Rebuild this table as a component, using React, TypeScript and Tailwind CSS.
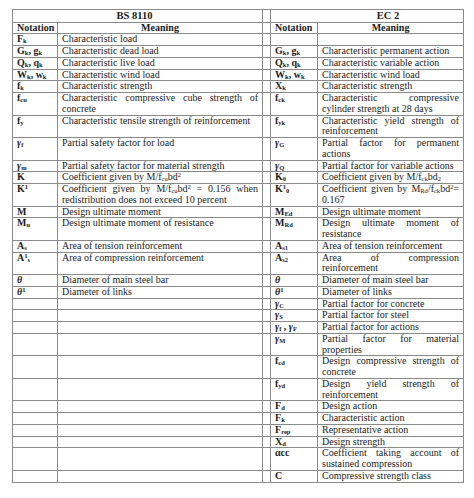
import type { ReactNode } from "react";

type Row = {
  bsN?: ReactNode;
  bsM?: ReactNode;
  ecN?: ReactNode;
  ecM?: ReactNode;
};

// small subscripts / superscripts, shifted with vertical-align so lines keep their height
const S = ({ children }: { children: ReactNode }) => (
  <span className="align-[-1px] text-[6.5px] leading-none font-bold">{children}</span>
);
const Sm = ({ children }: { children: ReactNode }) => (
  <span className="align-[-1px] text-[6.5px] leading-none">{children}</span>
);
const Up = ({ children }: { children: ReactNode }) => (
  <span className="align-[3px] text-[6.5px] leading-none">{children}</span>
);
const G = ({ children }: { children: ReactNode }) => <span className="italic">{children}</span>;

const rows: Row[] = [
  { bsN: <>F<S>k</S></>, bsM: "Characteristic load" },
  {
    bsN: <>G<S>k</S>, g<S>k</S></>,
    bsM: "Characteristic dead load",
    ecN: <>G<S>k</S>, g<S>k</S></>,
    ecM: "Characteristic permanent action",
  },
  {
    bsN: <>Q<S>k</S>, q<S>k</S></>,
    bsM: "Characteristic live load",
    ecN: <>Q<S>k</S>, q<S>k</S></>,
    ecM: "Characteristic variable action",
  },
  {
    bsN: <>W<S>k</S>, w<S>k</S></>,
    bsM: "Characteristic wind load",
    ecN: <>W<S>k</S>, w<S>k</S></>,
    ecM: "Characteristic wind load",
  },
  {
    bsN: <>f<S>k</S></>,
    bsM: "Characteristic strength",
    ecN: <>X<S>k</S></>,
    ecM: "Characteristic strength",
  },
  {
    bsN: <>f<S>cu</S></>,
    bsM: "Characteristic compressive cube strength of concrete",
    ecN: <>f<S>ck</S></>,
    ecM: "Characteristic compressive cylinder strength at 28 days",
  },
  {
    bsN: <>f<S>y</S></>,
    bsM: "Characteristic tensile strength of reinforcement",
    ecN: <>f<S>yk</S></>,
    ecM: "Characteristic yield strength of reinforcement",
  },
  {
    bsN: <><G>γ</G><S>f</S></>,
    bsM: "Partial safety factor for load",
    ecN: <><G>γ</G><S>G</S></>,
    ecM: "Partial factor for permanent actions",
  },
  {
    bsN: <><G>γ</G><S>m</S></>,
    bsM: "Partial safety factor for material strength",
    ecN: <><G>γ</G><S>Q</S></>,
    ecM: "Partial factor for variable actions",
  },
  {
    bsN: "K",
    bsM: <>Coefficient given by M/f<Sm>cu</Sm>bd<Up>2</Up></>,
    ecN: <>K<S>0</S></>,
    ecM: <>Coefficient given by M/f<Sm>ck</Sm>bd<Sm>2</Sm></>,
  },
  {
    bsN: <>K<Up>1</Up></>,
    bsM: (
      <>
        Coefficient given by M/f<Sm>cu</Sm>bd<Up>2</Up> = 0.156 when redistribution does not exceed 10
        percent
      </>
    ),
    ecN: <>K<Up>1</Up><S>0</S></>,
    ecM: <>Coefficient given by M<Sm>Rd</Sm>/f<Sm>ck</Sm>bd<Up>2</Up>= 0.167</>,
  },
  {
    bsN: "M",
    bsM: "Design ultimate moment",
    ecN: <>M<S>Ed</S></>,
    ecM: "Design ultimate moment",
  },
  {
    bsN: <>M<S>u</S></>,
    bsM: "Design ultimate moment of resistance",
    ecN: <>M<S>Rd</S></>,
    ecM: "Design ultimate moment of resistance",
  },
  {
    bsN: <>A<S>s</S></>,
    bsM: "Area of tension reinforcement",
    ecN: <>A<S>s1</S></>,
    ecM: "Area of tension reinforcement",
  },
  {
    bsN: <>A<Up>1</Up><S>s</S></>,
    bsM: "Area of compression reinforcement",
    ecN: <>A<S>s2</S></>,
    ecM: "Area of compression reinforcement",
  },
  {
    bsN: <G>θ</G>,
    bsM: "Diameter of main steel bar",
    ecN: <G>θ</G>,
    ecM: "Diameter of main steel bar",
  },
  {
    bsN: <><G>θ</G><Up>1</Up></>,
    bsM: "Diameter of links",
    ecN: <><G>θ</G><Up>1</Up></>,
    ecM: "Diameter of links",
  },
  { ecN: <><G>γ</G><S>C</S></>, ecM: "Partial factor for concrete" },
  { ecN: <><G>γ</G><S>S</S></>, ecM: "Partial factor for steel" },
  { ecN: <><G>γ</G><S>f</S> , <G>γ</G><S>F</S></>, ecM: "Partial factor for actions" },
  { ecN: <><G>γ</G><S>M</S></>, ecM: "Partial factor for material properties" },
  { ecN: <>f<S>cd</S></>, ecM: "Design compressive strength of concrete" },
  { ecN: <>f<S>yd</S></>, ecM: "Design yield strength of reinforcement" },
  { ecN: <>F<S>d</S></>, ecM: "Design action" },
  { ecN: <>F<S>k</S></>, ecM: "Characteristic action" },
  { ecN: <>F<S>rep</S></>, ecM: "Representative action" },
  { ecN: <>X<S>d</S></>, ecM: "Design strength" },
  { ecN: "αcc", ecM: "Coefficient taking account of sustained compression" },
  { ecN: "C", ecM: "Compressive strength class" },
];

const cell = "border border-[#8a8a8a] align-top p-0";
const nCell = `${cell} pl-[4px] font-bold`;
const mCell = `${cell} pl-[4px] pr-[4px] text-justify`;

export default function App() {
  return (
    <div className="min-h-[498px] w-[474px] bg-white pt-[9px] pl-[12px]">
      <table
        className="w-[451px] table-fixed border-collapse text-[10px] leading-[10.75px] text-[#1c1c1c] font-['Liberation_Serif','Times_New_Roman',serif]"
      >
        <colgroup>
          <col className="w-[45px]" />
          <col className="w-[205px]" />
          <col className="w-[8px]" />
          <col className="w-[47px]" />
          <col className="w-[146px]" />
        </colgroup>
        <tbody>
          <tr>
            <td colSpan={2} className={`${cell} text-center font-bold text-[10.5px] leading-[11.5px] pr-[6px]`}>
              BS 8110
            </td>
            <td className={cell} />
            <td colSpan={2} className={`${cell} text-center font-bold text-[10.5px] leading-[11.5px] pl-[42px]`}>
              EC 2
            </td>
          </tr>
          <tr>
            <td className={nCell}>Notation</td>
            <td className={`${cell} text-center font-bold`}>Meaning</td>
            <td className={cell} />
            <td className={nCell}>Notation</td>
            <td className={`${cell} text-center font-bold`}>Meaning</td>
          </tr>
          {rows.map((r, i) => (
            <tr key={i}>
              <td className={nCell}>{r.bsN}</td>
              <td className={mCell}>{r.bsM}</td>
              <td className={cell} />
              <td className={nCell}>{r.ecN}</td>
              <td className={mCell}>{r.ecM}</td>
            </tr>
          ))}
        </tbody>
      </table>
    </div>
  );
}
